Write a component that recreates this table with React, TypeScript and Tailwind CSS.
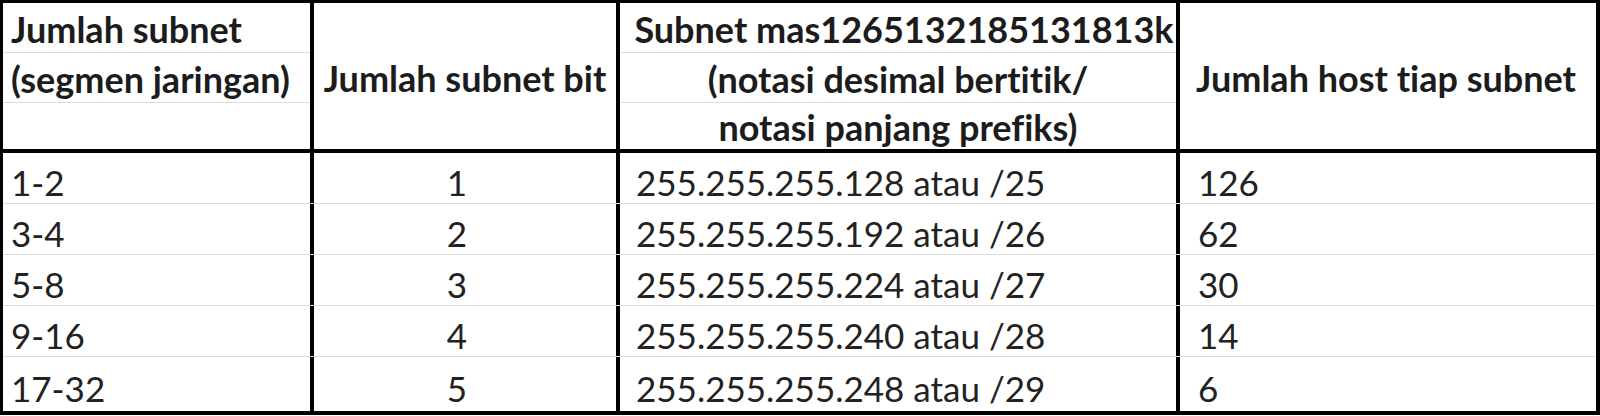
import React from 'react';

interface Row {
    range: string
    bits: string
    mask: string
    hosts: string
}

const rows: Row[] = [
    { range: "1-2", bits: "1", mask: "255.255.255.128 atau /25", hosts: "126" },
    { range: "3-4", bits: "2", mask: "255.255.255.192 atau /26", hosts: "62" },
    { range: "5-8", bits: "3", mask: "255.255.255.224 atau /27", hosts: "30" },
    { range: "9-16", bits: "4", mask: "255.255.255.240 atau /28", hosts: "14" },
    { range: "17-32", bits: "5", mask: "255.255.255.248 atau /29", hosts: "6" },
]

const App: React.FC = () => {
    return (
        <div className="w-[1600px] h-[416px] bg-white text-[#1c1c1c] font-['Lato','Liberation_Sans',sans-serif] [font-variant-ligatures:none]">
            <div className="w-[1600px] h-[415px] border-4 border-t-[3px] border-l-[3px] border-black flex flex-col">
                {/* header */}
                <div className="flex h-[150px] border-b-4 border-black font-bold text-[36px] leading-none">
                    <div className="w-[311px] border-r-4 border-black flex flex-col">
                        <div className="h-[50px] border-b border-[#dcdcdc] flex items-center pl-2 pt-0.5">Jumlah subnet</div>
                        <div className="h-[50px] border-b border-[#dcdcdc] flex items-center pl-2 pt-0.5">(segmen jaringan)</div>
                        <div className="flex-1"></div>
                    </div>
                    <div className="w-[306px] border-r-4 border-black flex items-center justify-center pt-1">
                        Jumlah subnet bit
                    </div>
                    <div className="w-[560px] border-r-4 border-black flex flex-col">
                        <div className="h-[50px] border-b border-[#dcdcdc] flex items-center justify-center pt-0.5 pl-3">Subnet mas1265132185131813k</div>
                        <div className="h-[50px] border-b border-[#dcdcdc] flex items-center justify-center pt-0.5">(notasi desimal bertitik/</div>
                        <div className="flex-1 flex items-center justify-center pt-0.5">notasi panjang prefiks)</div>
                    </div>
                    <div className="flex-1 flex items-center pl-[16px] pt-1">
                        Jumlah host tiap subnet
                    </div>
                </div>
                {/* data */}
                <div className="flex flex-col flex-1 text-[35px] leading-none text-[#222]">
                    {rows.map((r, i) => (
                        <div key={r.range} className={`flex h-[51px] ${i < rows.length - 1 ? 'border-b border-[#dcdcdc]' : 'flex-1'}`}>
                            <div className="w-[311px] border-r-4 border-black flex items-center pl-2 pt-2">{r.range}</div>
                            <div className="w-[306px] border-r-4 border-black flex items-center justify-center pr-4 pt-2">{r.bits}</div>
                            <div className="w-[560px] border-r-4 border-black flex items-center pl-4 pt-2">{r.mask}</div>
                            <div className="flex-1 flex items-center pl-[18px] pt-2">{r.hosts}</div>
                        </div>
                    ))}
                </div>
            </div>
        </div>
    )
}

export default App
